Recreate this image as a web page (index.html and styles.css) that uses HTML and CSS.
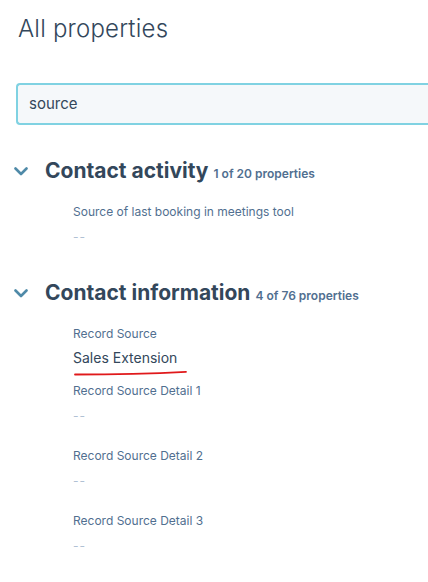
FILE: index.html
```html
<!DOCTYPE html>
<html>
<head>
<meta charset="utf-8">
<link rel="stylesheet" href="styles.css">
</head>
<body>
<div class="page">
  <h1 class="title">All properties</h1>
  <div class="search">source</div>

  <section class="group">
    <div class="group-head">
      <svg class="chev" width="14" height="9" viewBox="0 0 14 9"><path d="M1.5 1.5 L7 7 L12.5 1.5" fill="none" stroke="#4f8aa8" stroke-width="2.6" stroke-linecap="round" stroke-linejoin="round"/></svg>
      <span class="group-name">Contact activity</span>
      <span class="group-count">1 of 20 properties</span>
    </div>
    <div class="props">
      <div class="prop">
        <div class="label">Source of last booking in meetings tool</div>
        <div class="empty">--</div>
      </div>
    </div>
  </section>

  <section class="group">
    <div class="group-head">
      <svg class="chev" width="14" height="9" viewBox="0 0 14 9"><path d="M1.5 1.5 L7 7 L12.5 1.5" fill="none" stroke="#4f8aa8" stroke-width="2.6" stroke-linecap="round" stroke-linejoin="round"/></svg>
      <span class="group-name">Contact information</span>
      <span class="group-count">4 of 76 properties</span>
    </div>
    <div class="props">
      <div class="prop prop-filled">
        <div class="label">Record Source</div>
        <div class="value">Sales Extension</div>
        <svg class="mark" width="114" height="6" viewBox="0 0 114 6"><path d="M1 4.5 C40 4.5 80 3.5 112 1.8" fill="none" stroke="#e0191b" stroke-width="1.8" stroke-linecap="round"/></svg>
      </div>
      <div class="prop">
        <div class="label">Record Source Detail 1</div>
        <div class="empty">--</div>
      </div>
      <div class="prop">
        <div class="label">Record Source Detail 2</div>
        <div class="empty">--</div>
      </div>
      <div class="prop">
        <div class="label">Record Source Detail 3</div>
        <div class="empty">--</div>
      </div>
    </div>
  </section>
</div>
</body>
</html>
```

FILE: styles.css
```css
html, body {
  margin: 0;
  padding: 0;
  background: #ffffff;
  overflow: hidden;
}
body {
  font-family: Inter, "Noto Sans", sans-serif;
  color: #33475b;
}
.page {
  padding: 14px 0 0 16px;
}
.title {
  margin: 0 0 0 2px;
  font-size: 24px;
  font-weight: 300;
  line-height: 30px;
  color: #33475b;
  letter-spacing: 0.2px;
}
.search {
  margin-top: 39px;
  height: 38px;
  border: 2px solid #80d2e2;
  border-right: none;
  border-radius: 4px 0 0 4px;
  background: #f5f8fa;
  box-sizing: content-box;
  padding-left: 11px;
  font-size: 15px;
  line-height: 38px;
  color: #33475b;
}
.group {
  margin-top: 33px;
}
.group + .group {
  margin-top: 12px;
}
.group-head {
  display: flex;
  align-items: baseline;
  height: 30px;
}
.chev {
  margin-left: -2px;
  width: 14px;
  margin-right: 17px;
  align-self: center;
  position: relative;
  top: -2px;
}
.group-name {
  font-size: 21px;
  font-weight: 700;
  color: #33475b;
}
.group-count {
  margin-left: 5px;
  font-size: 12px;
  font-weight: 600;
  color: #516f90;
}
.props {
  padding-left: 57px;
  margin-top: 15px;
}
.prop {
  padding-bottom: 22px;
}
.label {
  font-size: 12px;
  line-height: 18px;
  color: #516f90;
}
.empty {
  margin-top: 7px;
  font-size: 12px;
  line-height: 18px;
  color: #b0c1d4;
  letter-spacing: 1px;
}
.value {
  margin-top: 5px;
  font-size: 14px;
  line-height: 20px;
  color: #33475b;
}
.mark {
  display: block;
  margin: 2px 0 0 1px;
}
.prop-filled {
  padding-bottom: 6px;
}
```
